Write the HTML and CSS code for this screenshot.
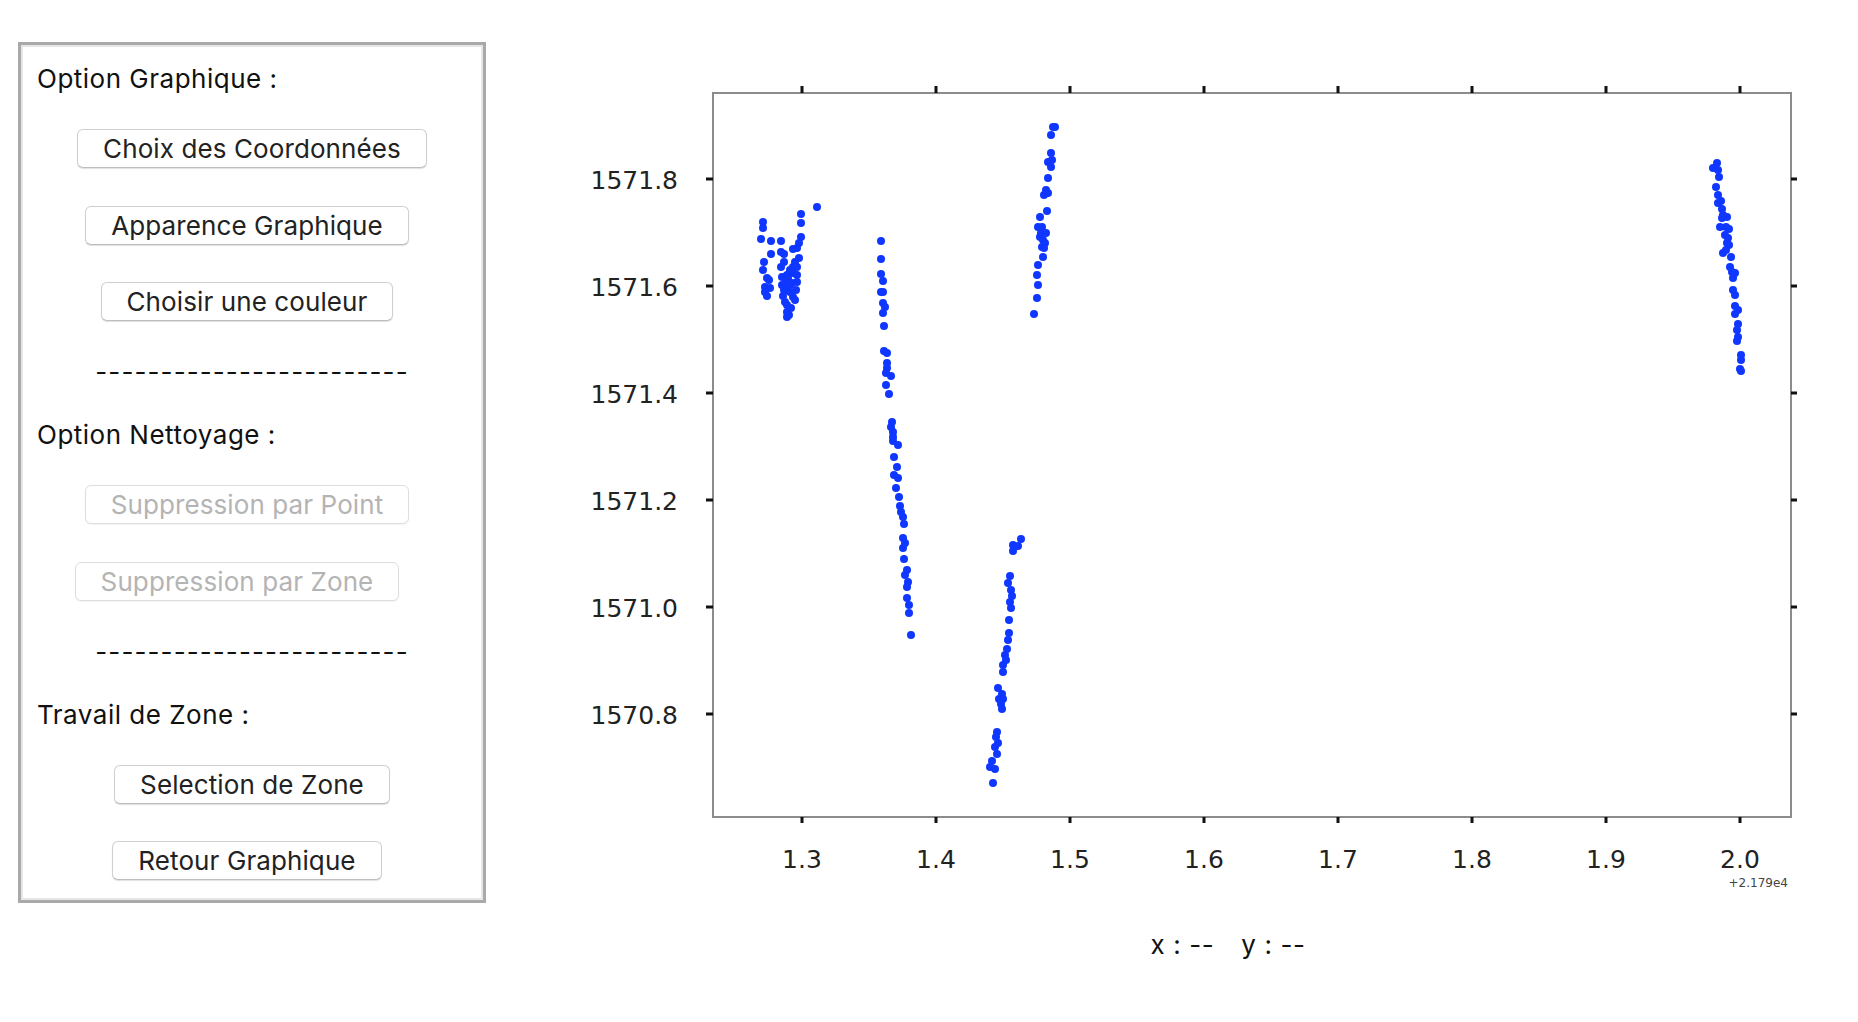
FILE: index.html
```html
<!doctype html>
<html lang="fr">
<head>
  <meta charset="utf-8"/>
  <title>Nettoyage des points</title>
  <link rel="stylesheet" href="styles.css">
</head>
<body>
<div class="app">

  <div class="panel">
    <div class="section">Option Graphique :</div>
    <button class="btn">Choix des Coordonnées</button>
    <button class="btn btn-nudge">Apparence Graphique</button>
    <button class="btn btn-nudge">Choisir une couleur</button>
    <div class="sep">------------------------</div>

    <div class="section">Option Nettoyage :</div>
    <button class="btn btn-nudge" disabled>Suppression par Point</button>
    <button class="btn btn-left" disabled>Suppression par Zone</button>
    <div class="sep">------------------------</div>

    <div class="section">Travail de Zone :</div>
    <button class="btn">Selection de Zone</button>
    <button class="btn btn-nudge">Retour Graphique</button>
  </div>

  <div class="figure">
    <svg class="plot" width="1298" height="860" viewBox="560 42 1298 860">
      <rect class="frame" x="713" y="93" width="1078" height="724"/>
      <g id="ticks"></g>
      <g id="labels" class="tick-label"></g>
      <g id="dots" class="dots"></g>
      <text class="offset" x="1788" y="887">+2.179e4</text>
    </svg>
    <div class="coords"><span>x : --</span><span>y : --</span></div>
  </div>

</div>
<script src="plot.js"></script>
</body>
</html>
```

FILE: styles.css
```css
body{margin:0;background:#fff;font-family:Inter,"Noto Sans",sans-serif;color:#1d1d1d}
.app{display:flex;align-items:flex-start;padding:42px 0 0 18px}

/* left option panel */
.panel{box-sizing:border-box;width:468px;height:861px;padding:19px 0 0 16px;border:3px solid #a9a9a9;box-shadow:inset 0 0 0 2px #e6e6e6;display:flex;flex-direction:column}
.section{font-size:26px;line-height:30px;letter-spacing:.5px;color:#111}
.btn{align-self:center;margin-left:-16px;height:39px;padding:0 25px;background:#fff;border:1px solid #cfcfcf;border-bottom-color:#bdbdbd;border-radius:6px;box-shadow:0 1px 1px rgba(0,0,0,.12);font-family:inherit;font-size:26px;letter-spacing:.1px;color:#222}
.btn:disabled{color:#b4b4b4;border-color:#dedede;box-shadow:0 1px 1px rgba(0,0,0,.05)}
.btn-nudge{margin-left:-26px}
.btn-left{margin-left:-46px}
.section + .btn{margin-top:35px}
.btn + .btn{margin-top:37.5px}
.btn + .sep{margin-top:36px}
.sep + .section{margin-top:33px}
.sep{align-self:center;margin-left:-16px;font-size:26px;line-height:30px;letter-spacing:1.1px;color:#111}

/* plot area */
.figure{margin-left:74px;display:flex;flex-direction:column}
.plot{display:block}
.frame{fill:#fff;stroke:#8c8c8c;stroke-width:2}
.tick{fill:#111}
.tick-label{font-family:"DejaVu Sans",sans-serif;font-size:25px;fill:#222}
.offset{font-family:"DejaVu Sans",sans-serif;font-size:12px;fill:#444;text-anchor:end}
.dots circle{fill:#0f37ff}
.coords{margin-top:28px;padding-left:38px;display:flex;justify-content:center;gap:27px;font-size:26px;line-height:30px;letter-spacing:.6px;color:#111}
```

FILE: plot.js
```js
const NS = 'http://www.w3.org/2000/svg';

function el(tag, attrs, parent, text) {
  const e = document.createElementNS(NS, tag);
  for (const k in attrs) e.setAttribute(k, attrs[k]);
  if (text) e.textContent = text;
  parent.appendChild(e);
  return e;
}

// axes box in page pixels
const box = {left: 713, top: 93, right: 1791, bottom: 817};
const ticks = $('#ticks'), labels = $('#labels'), dots = $('#dots');

// x axis : 1.3 .. 2.0 (offset +2.179e4)
for (let i = 0; i < 8; i++) {
  const x = 802 + i * 134;
  el('rect', {class: 'tick', x: x - 1.5, y: box.top - 7, width: 3, height: 7}, ticks);
  el('rect', {class: 'tick', x: x - 1.5, y: box.bottom, width: 3, height: 6}, ticks);
  el('text', {x, y: 868, 'text-anchor': 'middle'}, labels, (1.3 + i / 10).toFixed(1));
}

// y axis : 1571.8 .. 1570.8
for (let i = 0; i < 6; i++) {
  const y = 179 + i * 107;
  el('rect', {class: 'tick', x: box.left - 7, y: y - 1.5, width: 7, height: 3}, ticks);
  el('rect', {class: 'tick', x: box.right, y: y - 1.5, width: 6, height: 3}, ticks);
  el('text', {x: 678, y: y + 10, 'text-anchor': 'end'}, labels, (1571.8 - i * 0.2).toFixed(1));
}

// measured points, already in pixels
const pts = `
817,207 801,214 801,223 763,222 763,228 761,239 771,241 781,241 801,237 799,243 793,249 797,248
771,254 781,252 784,254 799,258 764,262 763,270 781,267 793,267 797,267 767,278 769,280 782,277
787,275 793,273 797,275 765,287 770,288 782,285 792,283 797,282 767,296 765,292 787,290 783,296
793,297 795,300 787,305 791,308 787,312 787,317 789,315 785,302 790,270 795,262 788,278 784,262
790,285 786,282 784,290 790,292 796,290
881,241 881,259 881,274 883,281 881,292 883,292 883,303 885,307 883,313 884,326 884,351 887,353
887,363 887,368 886,373 891,376 886,385 889,394 892,422 891,427 893,432 893,437 893,441 898,445
894,457 897,467 894,475 898,478 896,488 899,497 900,506 901,512 903,517 904,524 903,538 905,543
903,548 904,559 907,570 905,575 908,582 907,587 907,598 909,605 909,613 911,635
1053,127 1055,127 1051,135 1051,153 1048,162 1051,167 1048,178 1046,190 1048,193 1044,195
1047,211 1040,217 1038,227 1042,227 1041,233 1046,233 1043,240 1042,247 1044,248 1043,257
1038,265 1037,275 1038,285 1037,298 1034,314 1040,237 1045,243 1052,160
1021,539 1013,545 1013,551 1018,546 1010,576 1008,583 1012,596 1011,608 1009,620 1009,633
1008,640 1007,649 1005,655 1003,665 1003,672 998,688 1002,694 999,699 1003,699 1002,709
997,732 998,743 995,747 997,754 992,761 990,767 995,769 993,783 1011,590 1010,602 1006,660
1001,704 996,737
1717,163 1713,168 1718,170 1719,177 1716,187 1718,195 1721,201 1718,203 1722,209 1723,215
1727,217 1722,218 1720,227 1726,227 1729,229 1725,235 1728,238 1727,243 1729,245 1723,253
1726,250 1731,257 1730,267 1732,272 1735,273 1733,278 1733,290 1735,295 1735,306 1738,310
1735,314 1738,324 1737,330 1738,337 1737,341 1741,355 1741,360 1740,369 1741,371
`.trim().split(/\s+/);

pts.forEach(p => {
  const [cx, cy] = p.split(',');
  el('circle', {cx, cy, r: 4}, dots);
});

function $(s){return document.querySelector(s)}
```
